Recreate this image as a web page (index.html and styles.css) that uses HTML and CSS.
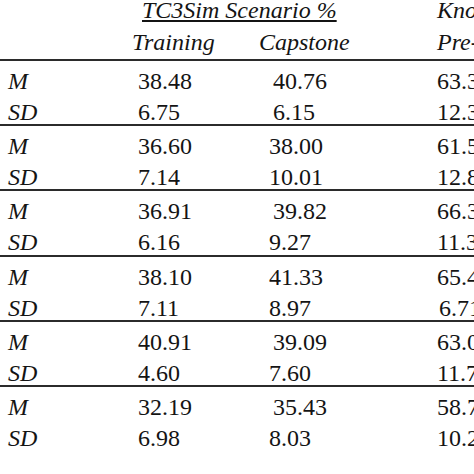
FILE: index.html
```html
<!DOCTYPE html>
<html>
<head>
<meta charset="utf-8">
<link rel="stylesheet" href="styles.css">
</head>
<body>
<div class="table">
  <div class="head">
    <div class="hrow1">
      <div class="cell"></div>
      <div class="cell span2"><span class="ul">TC3Sim Scenario %</span></div>
      <div class="cell kno">Knowledge Test %</div>
    </div>
    <div class="hrow2">
      <div class="cell"></div>
      <div class="cell train">Training</div>
      <div class="cell cap">Capstone</div>
      <div class="cell pre">Pre-test</div>
    </div>
  </div>

  <div class="group">
    <div class="row m"><div class="lab">M</div><div>38.48</div><div class="r">40.76</div><div>63.3</div></div>
    <div class="row"><div class="lab">SD</div><div>6.75</div><div class="r">6.15</div><div>12.3</div></div>
  </div>
  <div class="group">
    <div class="row m"><div class="lab">M</div><div>36.60</div><div>38.00</div><div>61.5</div></div>
    <div class="row"><div class="lab">SD</div><div>7.14</div><div>10.01</div><div>12.8</div></div>
  </div>
  <div class="group">
    <div class="row m"><div class="lab">M</div><div>36.91</div><div class="r">39.82</div><div>66.3</div></div>
    <div class="row"><div class="lab">SD</div><div>6.16</div><div>9.27</div><div>11.3</div></div>
  </div>
  <div class="group">
    <div class="row m"><div class="lab">M</div><div>38.10</div><div>41.33</div><div>65.4</div></div>
    <div class="row"><div class="lab">SD</div><div>7.11</div><div>8.97</div><div class="r2">6.71</div></div>
  </div>
  <div class="group">
    <div class="row m"><div class="lab">M</div><div>40.91</div><div class="r">39.09</div><div>63.0</div></div>
    <div class="row"><div class="lab">SD</div><div>4.60</div><div>7.60</div><div>11.7</div></div>
  </div>
  <div class="group">
    <div class="row m"><div class="lab">M</div><div>32.19</div><div class="r">35.43</div><div>58.7</div></div>
    <div class="row"><div class="lab">SD</div><div>6.98</div><div>8.03</div><div>10.2</div></div>
  </div>
</div>
</body>
</html>
```

FILE: styles.css
```css
html, body {
  margin: 0;
  padding: 0;
  background: #ffffff;
  overflow: hidden;
}
body {
  width: 474px;
  height: 474px;
  font-family: "Liberation Serif", "Times New Roman", serif;
  font-size: 24px;
  color: #141414;
  white-space: nowrap;
}
.table {
  width: 640px;
}
.hrow1, .hrow2, .row {
  display: grid;
  grid-template-columns: 138px 131px 168px 200px;
}
.hrow1 {
  line-height: 20px;
  height: 20px;
}
.span2 {
  grid-column: 2 / span 2;
  padding-left: 4px;
  font-style: italic;
}
.ul {
  text-decoration: underline;
  text-decoration-thickness: 1.5px;
  text-underline-offset: 2px;
}
.kno {
  font-style: italic;
}
.hrow2 {
  padding-top: 8px;
  line-height: 28px;
  height: 31px;
  font-style: italic;
}
.train { margin-left: -6px; }
.cap { margin-left: -10px; }
.group {
  border-top: 2px solid #2b2b2b;
  padding-bottom: 0.2px;
}
.row {
  padding-top: 7px;
  line-height: 24px;
}
.row.m {
  padding-top: 8px;
}
.lab {
  padding-left: 8px;
  font-style: italic;
}
.r { padding-left: 4px; }
.r2 { padding-left: 2px; }
```
